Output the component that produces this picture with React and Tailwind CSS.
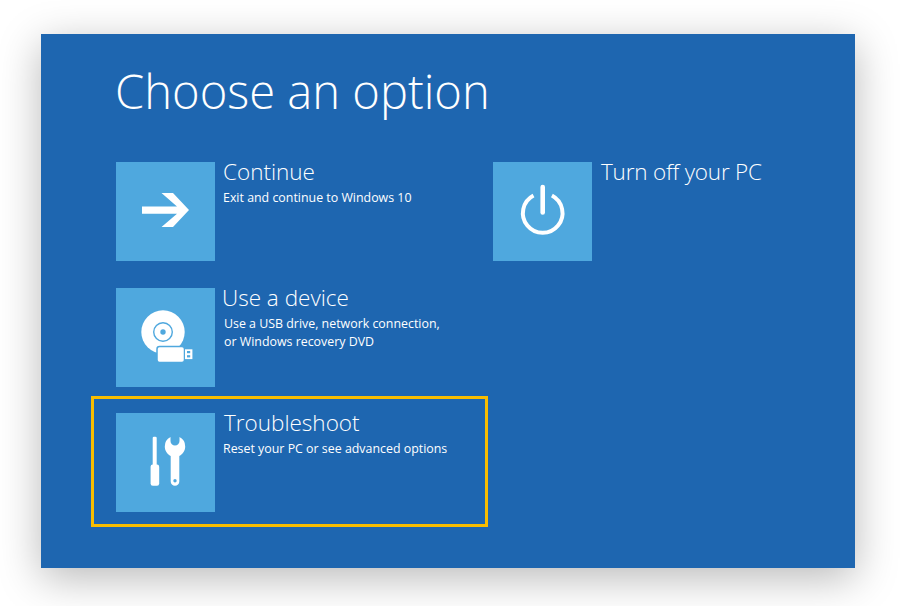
const FONT = "font-['Open_Sans',sans-serif]";

function ArrowIcon() {
  return (
    <svg viewBox="0 0 99 99" className="w-full h-full">
      <path d="M26 44.500h35L45.500 31h11.500L73 48 57 65H45.500L61 51.700H26z" fill="#fff" />
    </svg>
  );
}

function DeviceIcon() {
  return (
    <svg viewBox="0 0 99 99" className="w-full h-full">
      <circle cx="47" cy="44" r="21.700" fill="#fff" />
      <circle cx="47" cy="44" r="9.300" fill="none" stroke="#4fa8de" strokeWidth="1.400" />
      <circle cx="47" cy="44" r="2.700" fill="#4fa8de" />
      <rect x="41" y="58.600" width="27.500" height="15.800" rx="2.500" fill="#fff" stroke="#4fa8de" strokeWidth="1.500" />
      <rect x="69" y="61.300" width="7.400" height="9.800" fill="#fff" />
      <rect x="71" y="63" width="3.200" height="2.200" fill="#4fa8de" />
      <rect x="71" y="67.200" width="3.200" height="2.200" fill="#4fa8de" />
    </svg>
  );
}

function ToolsIcon() {
  return (
    <svg viewBox="0 0 99 99" className="w-full h-full">
      <path d="M36.700 25a1.300 1.300 0 0 1 1.300-1.300h1.400a1.300 1.300 0 0 1 1.300 1.300v27h-4z" fill="#fff" />
      <rect x="34.600" y="51.500" width="8.600" height="21.300" rx="2.200" fill="#fff" />
      <path
        fillRule="evenodd"
        d="M54.500 24v4a4.500 4.500 0 0 0 9 0v-4a10.500 10.500 0 0 1 5.700 9.500c0 4.200-2.300 7.600-5.900 9.400V68.500a4.300 4.300 0 0 1-8.600 0V42.900C51.100 41.100 48.800 37.700 48.800 33.500a10.500 10.500 0 0 1 5.700-9.500zM59 66a1.700 1.700 0 1 0 0 3.400 1.700 1.700 0 0 0 0-3.400z"
        fill="#fff"
      />
    </svg>
  );
}

function PowerIcon() {
  return (
    <svg viewBox="0 0 99 99" className="w-full h-full">
      <path d="M40.500 33.500a19.800 19.800 0 1 0 18.400 0" fill="none" stroke="#fff" strokeWidth="4" />
      <path d="M49.700 25v25.500" fill="none" stroke="#fff" strokeWidth="4.600" strokeLinecap="round" />
    </svg>
  );
}

function Option({ icon, title, children }) {
  return (
    <div className="flex items-start">
      <div className="w-[99px] h-[99px] bg-[#4fa8de] shrink-0">{icon}</div>
      <div className={`${FONT} text-white`}>
        <div className="text-[22.500px] leading-[20px] font-light">{title}</div>
        {children && <div className="text-[12.400px] leading-[17.500px] ml-[8px] mt-[7px]">{children}</div>}
      </div>
    </div>
  );
}

export default function App() {
  return (
    <div className="w-[900px] h-[606px] bg-white pt-[34px] pl-[41px] overflow-hidden">
      <div className="w-[814px] h-[534px] bg-[#1e66b0] pl-[75px] shadow-[0_10px_40px_rgba(0,0,0,0.28)]">
        <h1 className={`${FONT} text-white text-[47.100px] leading-[60px] font-light pt-[27px] h-[128px] -ml-[1px]`}>
          Choose an option
        </h1>
        <div className="flex">
          <div className="w-[377px] flex flex-col">
            <Option icon={<ArrowIcon />} title={<span className="ml-[8px]">Continue</span>}>
              Exit and continue to Windows 10
            </Option>
            <div className="mt-[27px]">
              <Option icon={<DeviceIcon />} title={<span className="ml-[7px]">Use a device</span>}>
                <span className="ml-[1px]">Use a USB drive, network connection,</span>
                <br />
                <span className="ml-[1px]">or Windows recovery DVD</span>
              </Option>
            </div>
            <div className="mt-[26px] relative">
              <Option icon={<ToolsIcon />} title={<span className="ml-[9px]">Troubleshoot</span>}>
                Reset your PC or see advanced options
              </Option>
              <div className="absolute left-[-25px] top-[-17px] w-[397px] h-[131px] border-[3px] border-[#f8bd00]" />
            </div>
          </div>
          <Option icon={<PowerIcon />} title={<span className="ml-[9px] tracking-[-0.2px]">Turn off your PC</span>} />
        </div>
      </div>
    </div>
  );
}
